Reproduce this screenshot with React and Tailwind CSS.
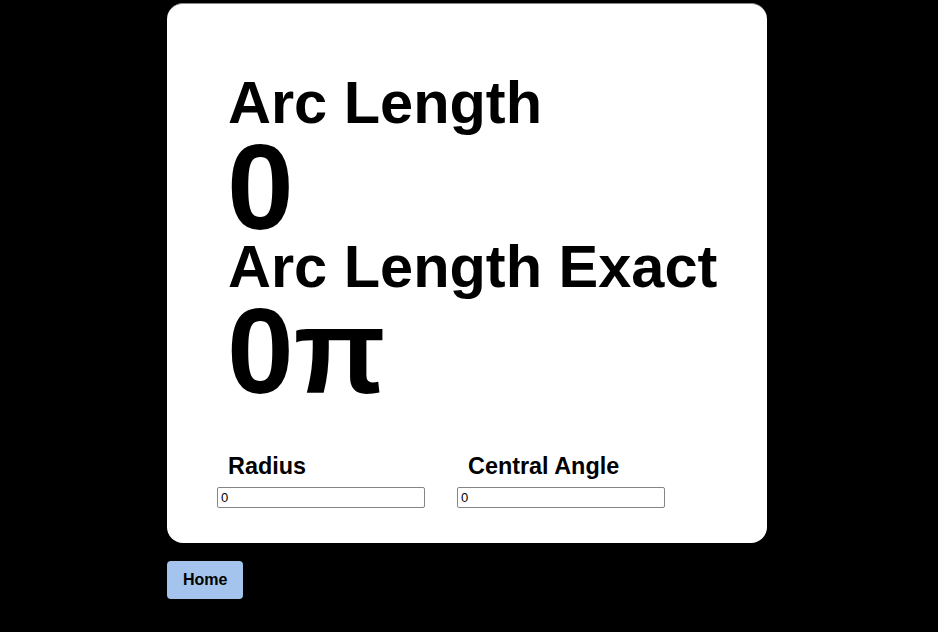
import { useState } from "react";

// Arc length from radius and central angle (degrees)
const arcLength = (r, deg) => {
    const value = (Number(r) || 0) * (Number(deg) || 0) * Math.PI / 180;
    return Math.round(value * 100) / 100;
};

const arcLengthExact = (r, deg) => {
    const coef = (Number(r) || 0) * (Number(deg) || 0) / 180;
    return Math.round(coef * 100) / 100;
};

const Field = ({ label, value, onChange }) => (
    <div className="flex flex-col w-[240px]">
        <h3 className="pl-[11px] text-[23.4px] leading-[28px] font-bold text-black">{label}</h3>
        <input
            type="text"
            value={value}
            onChange={(e) => onChange(e.target.value)}
            className="mt-[7px] w-[208px] h-[21px] px-[3px] text-[13px] bg-white text-black border border-[#858585] rounded-[2px] outline-none"
        />
    </div>
);

const App = () => {
    const [radius, setRadius] = useState("0");
    const [angle, setAngle] = useState("0");

    return (
        <div className="min-h-[632px] bg-black pt-[3px] pl-[167px] font-['Liberation_Sans',Arial,sans-serif]">
            {/* Calculator card */}
            <div className="w-[600px] h-[540px] bg-white rounded-[16px] border-t border-[#8a8a8a] flex flex-col">
                <div className="pl-[61px] pt-[73px] flex flex-col text-black font-bold">
                    <h1 className="text-[59.5px] leading-[52px]">Arc Length</h1>
                    <div className="mt-[3px] -ml-[1px] text-[120px] leading-[110px]">{arcLength(radius, angle)}</div>
                    <h1 className="-mt-[1px] text-[59.5px] leading-[52px]">Arc Length Exact</h1>
                    <div className="mt-[3px] -ml-[1px] text-[120px] leading-[110px]">{arcLengthExact(radius, angle)}π</div>
                </div>

                {/* Inputs */}
                <div className="mt-[46px] pl-[50px] flex">
                    <Field label="Radius" value={radius} onChange={setRadius} />
                    <Field label="Central Angle" value={angle} onChange={setAngle} />
                </div>
            </div>

            <button className="mt-[18px] h-[38px] px-[16px] bg-[#a4c4ee] rounded-[4px] text-[16px] font-bold text-black">
                Home
            </button>
        </div>
    );
};

export default App;
